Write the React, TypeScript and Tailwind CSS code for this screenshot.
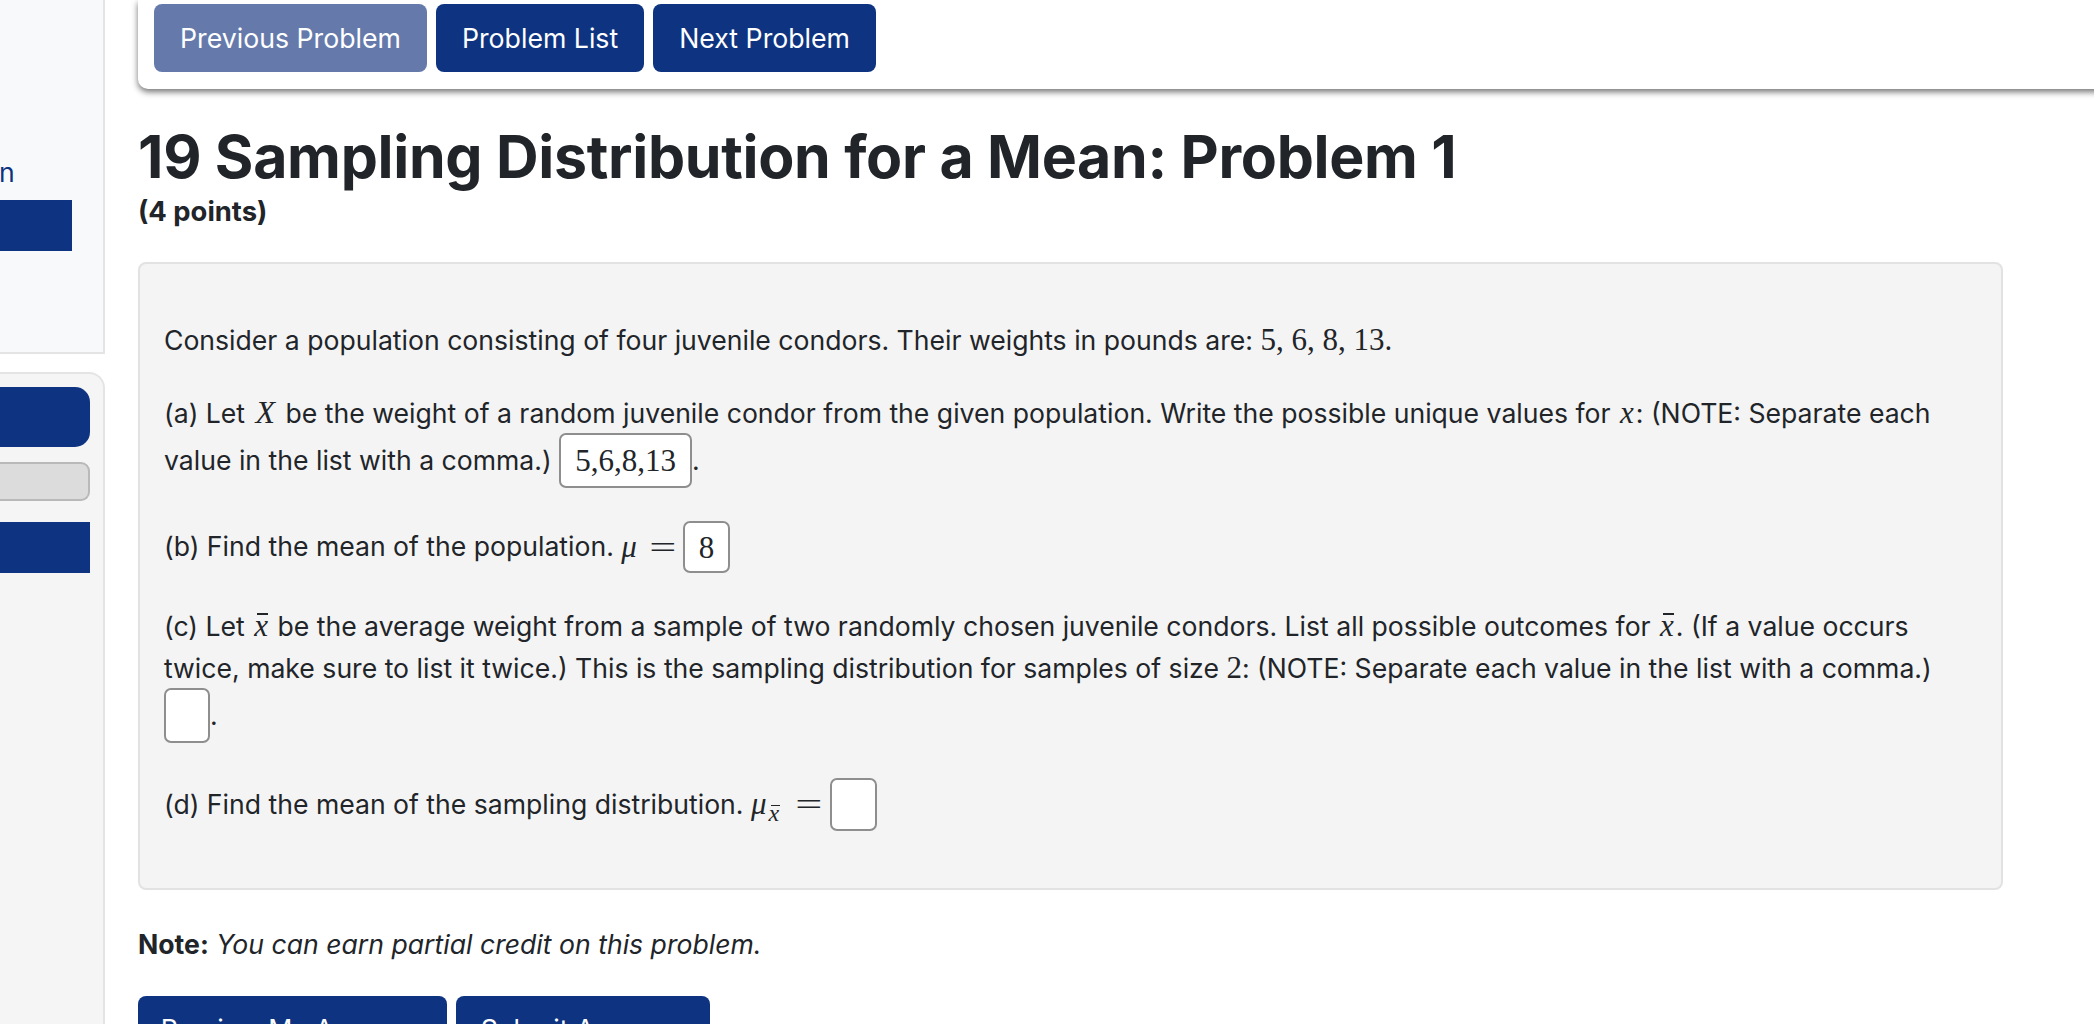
import React from "react";

const BLUE = "bg-[#0e3481]";
const SERIF = "font-['Liberation_Serif',serif]";

function XBar({
  size = "text-[31px]",
  pad = "px-[2px]",
  bar = "left-[5px] right-[2px] top-[3px]",
}: {
  size?: string;
  pad?: string;
  bar?: string;
}) {
  return (
    <span className={`relative inline-block leading-none italic ${SERIF} ${size} ${pad}`}>
      x
      <span className={`absolute ${bar} h-[1.5px] bg-[#212529]`} />
    </span>
  );
}

function M({ children, italic = false, cls = "" }: { children: React.ReactNode; italic?: boolean; cls?: string }) {
  return <span className={`${SERIF} text-[31px] ${italic ? "italic" : ""} ${cls}`}>{children}</span>;
}

function Eq({ cls = "" }: { cls?: string }) {
  return (
    <span className={`inline-block w-[24px] text-center ${SERIF} text-[31px] leading-none ${cls}`}>
      <span className="inline-block scale-x-[1.55]">=</span>
    </span>
  );
}

function Box({ w, h, children }: { w: string; h: string; children?: React.ReactNode }) {
  return (
    <span
      className={`inline-flex shrink-0 items-center justify-center ${w} ${h} bg-white border-2 border-[#8e8e8e] rounded-[7px] ${SERIF} text-[31px] leading-none`}
    >
      {children}
    </span>
  );
}

export default function App() {
  return (
    <div className="w-[2094px] h-[1024px] overflow-hidden bg-white flex items-start font-['Inter',sans-serif] text-[#212529]">
      {/* Sidebar */}
      <aside className="w-[105px] h-[1024px] shrink-0 flex flex-col">
        <div className="h-[354px] shrink-0 bg-[#f8f9fa] border-r-2 border-b-2 border-[#e4e4e4] overflow-hidden">
          <div className="mt-[152px] h-[41px] leading-[41px] text-[26.6px] text-[#0e3481] -ml-[1px]">n</div>
          <div className={`mt-[7px] h-[51px] w-[72px] ${BLUE}`} />
        </div>
        <div className="mt-[18px] flex-1 bg-[#f5f5f5] border-t-2 border-r-2 border-[#e4e4e4] rounded-tr-[16px] pt-[13px]">
          <div className={`h-[60px] w-[90px] ${BLUE} rounded-r-[15px]`} />
          <div className="mt-[15px] h-[39px] w-[90px] bg-[#dcdcdc] border-2 border-l-0 border-[#b9b9b9] rounded-r-[9px]" />
          <div className={`mt-[21px] h-[51px] w-[90px] ${BLUE}`} />
        </div>
      </aside>

      {/* Main */}
      <main className="flex-1 min-w-0 pl-[33px]">
        <div className="h-[89px] -mr-[30px] bg-white rounded-bl-[10px] shadow-[0_3px_6px_rgba(0,0,0,0.55)] flex items-start gap-[9px] pl-[16px] pt-[4px]">
          <div className="h-[68px] px-[26px] flex items-center rounded-[8px] bg-[#657aab] text-white text-[26.7px]">
            Previous Problem
          </div>
          <div className="h-[68px] px-[26px] flex items-center rounded-[8px] bg-[#0e3481] text-white text-[26.7px]">
            Problem List
          </div>
          <div className="h-[68px] px-[26px] flex items-center rounded-[8px] bg-[#0e3481] text-white text-[26.7px]">
            Next Problem
          </div>
        </div>

        <h1 className="mt-[33px] text-[59px] font-bold leading-[70px] tracking-[-0.3px] whitespace-nowrap">
          19 Sampling Distribution for a Mean: Problem 1
        </h1>
        <div className="text-[27.4px] font-bold leading-[39px]">(4 points)</div>

        <div className="mt-[31px] w-[1865px] bg-[#f4f4f4] border-2 border-[#e2e2e2] rounded-[8px] pl-[24px] pt-[55px] pb-[57px] text-[26.6px] whitespace-nowrap">
          <div className="h-[41px] leading-[41px]">
            Consider a population consisting of four juvenile condors. Their weights in pounds are:{" "}
            <M>5, 6, 8, 13.</M>
          </div>

          <div className="mt-[32px]">
            <div className="h-[41px] leading-[41px]">
              (a) Let <M italic cls="text-[32px] px-[3px]">X</M> be the weight of a random juvenile condor from the
              given population. Write the possible unique values for <M italic cls="px-[2px]">x</M>: (NOTE: Separate
              each
            </div>
            <div className="h-[55px] flex items-center">
              <span className="whitespace-pre">value in the list with a comma.) </span>
              <Box w="w-[133px]" h="h-[55px]">5,6,8,13</Box>
              <span>.</span>
            </div>
          </div>

          <div className="mt-[33px] h-[52px] flex items-center">
            <span className="whitespace-pre">(b) Find the mean of the population. </span>
            <span className={`${SERIF} text-[31px] italic`}>μ</span>
            <Eq cls="ml-[14px] mr-[8px]" />
            <Box w="w-[47px]" h="h-[52px]">8</Box>
          </div>

          <div className="mt-[33px]">
            <div className="h-[41px] leading-[41px]">
              (c) Let <XBar /> be the average weight from a sample of two randomly chosen juvenile condors. List all
              possible outcomes for <XBar />. (If a value occurs
            </div>
            <div className="h-[41px] leading-[41px]">
              twice, make sure to list it twice.) This is the sampling distribution for samples of size <M>2</M>:
              (NOTE: Separate each value in the list with a comma.)
            </div>
            <div className="h-[55px] flex items-center">
              <Box w="w-[46px]" h="h-[55px]" />
              <span>.</span>
            </div>
          </div>

          <div className="mt-[35px] h-[53px] flex items-center">
            <span className="whitespace-pre">(d) Find the mean of the sampling distribution. </span>
            <span className={`${SERIF} text-[31px] italic`}>μ</span>
            <span className="relative top-[7px]">
              <XBar size="text-[24px]" pad="px-[2px]" bar="left-[4px] right-[1px] top-[4px]" />
            </span>
            <Eq cls="ml-[16px] mr-[9px]" />
            <Box w="w-[47px]" h="h-[53px]" />
          </div>
        </div>

        <div className="mt-[34px] h-[41px] leading-[41px] text-[26.6px]">
          <b>Note:</b> <i>You can earn partial credit on this problem.</i>
        </div>

        <div className="mt-[31px] flex gap-[9px]">
          <div className="h-[67px] w-[309px] rounded-[8px] bg-[#0e3481] text-white text-[26.7px] flex items-center justify-center">
            Preview My Answers
          </div>
          <div className="h-[67px] w-[254px] rounded-[8px] bg-[#0e3481] text-white text-[26.7px] flex items-center justify-center">
            Submit Answers
          </div>
        </div>
      </main>
    </div>
  );
}
